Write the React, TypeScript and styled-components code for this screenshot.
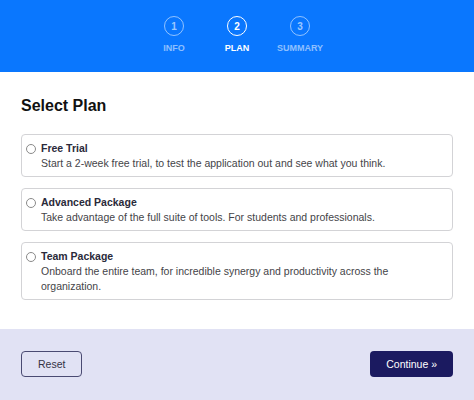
import React from "react";
import styled, { createGlobalStyle } from "styled-components";

const Global = createGlobalStyle`
  html, body { margin: 0; padding: 0; background: #ffffff; }
  body { font-family: "Liberation Sans", Arial, sans-serif; }
  * { box-sizing: border-box; }
`;

const Page = styled.div`
  width: 474px;
  min-height: 400px;
  display: flex;
  flex-direction: column;
  background: #ffffff;
`;

const Header = styled.header`
  height: 72px;
  background: #0a77fe;
  display: flex;
  justify-content: center;
  padding-top: 16px;
`;

const Step = styled.div`
  width: 63px;
  display: flex;
  flex-direction: column;
  align-items: center;
  gap: 7px;
`;

const Circle = styled.div<{ $active?: boolean }>`
  width: 20px;
  height: 20px;
  border-radius: 50%;
  border: 1.5px solid ${(p) => (p.$active ? "#ffffff" : "rgba(255,255,255,0.55)")};
  color: ${(p) => (p.$active ? "#ffffff" : "rgba(255,255,255,0.6)")};
  font-size: 10px;
  font-weight: 700;
  display: flex;
  align-items: center;
  justify-content: center;
`;

const StepLabel = styled.div<{ $active?: boolean }>`
  font-size: 9px;
  line-height: 11px;
  font-weight: 700;
  text-transform: uppercase;
  color: ${(p) => (p.$active ? "#ffffff" : "rgba(255,255,255,0.55)")};
`;

const Main = styled.main`
  padding: 24px 21px 29px;
  display: flex;
  flex-direction: column;
`;

const Title = styled.h1`
  margin: 0 0 18px;
  font-size: 16px;
  line-height: 20px;
  font-weight: 700;
  color: #111111;
`;

const List = styled.div`
  display: flex;
  flex-direction: column;
  gap: 11px;
`;

const Card = styled.label`
  display: grid;
  grid-template-columns: 10px 1fr;
  column-gap: 5px;
  padding: 6px 9px 5px 4px;
  border: 1px solid #d3d3d6;
  border-radius: 4px;
  background: #ffffff;
`;

const Radio = styled.span`
  width: 10px;
  height: 10px;
  margin-top: 2.5px;
  border-radius: 50%;
  border: 1px solid #8a8a8a;
  background: #ffffff;
`;

const Body = styled.div`
  display: flex;
  flex-direction: column;
  font-size: 10.5px;
  line-height: 15px;
`;

const Name = styled.div`
  font-weight: 700;
  color: #2a2a3a;
`;

const Desc = styled.div`
  color: #444448;
`;

const Footer = styled.footer`
  flex: 1;
  background: #e1e2f4;
  padding: 22px 21px;
  display: flex;
  justify-content: space-between;
  align-items: flex-start;
`;

const Button = styled.button<{ $primary?: boolean }>`
  height: 26px;
  padding: 0 16px;
  border-radius: 4px;
  font-family: "Liberation Sans", Arial, sans-serif;
  font-size: 10.5px;
  border: ${(p) => (p.$primary ? "none" : "1px solid #4a4a72")};
  background: ${(p) => (p.$primary ? "#1b1a60" : "transparent")};
  color: ${(p) => (p.$primary ? "#ffffff" : "#333344")};
`;

const steps = [
  { n: 1, label: "Info" },
  { n: 2, label: "Plan", active: true },
  { n: 3, label: "Summary" },
];

const plans = [
  {
    name: "Free Trial",
    desc: "Start a 2-week free trial, to test the application out and see what you think.",
  },
  {
    name: "Advanced Package",
    desc: "Take advantage of the full suite of tools. For students and professionals.",
  },
  {
    name: "Team Package",
    desc: "Onboard the entire team, for incredible synergy and productivity across the organization.",
  },
];

export default function App() {
  return (
    <Page>
      <Global />
      <Header>
        {steps.map((s) => (
          <Step key={s.n}>
            <Circle $active={s.active}>{s.n}</Circle>
            <StepLabel $active={s.active}>{s.label}</StepLabel>
          </Step>
        ))}
      </Header>
      <Main>
        <Title>Select Plan</Title>
        <List>
          {plans.map((p) => (
            <Card key={p.name}>
              <Radio />
              <Body>
                <Name>{p.name}</Name>
                <Desc>{p.desc}</Desc>
              </Body>
            </Card>
          ))}
        </List>
      </Main>
      <Footer>
        <Button>Reset</Button>
        <Button $primary>Continue »</Button>
      </Footer>
    </Page>
  );
}
